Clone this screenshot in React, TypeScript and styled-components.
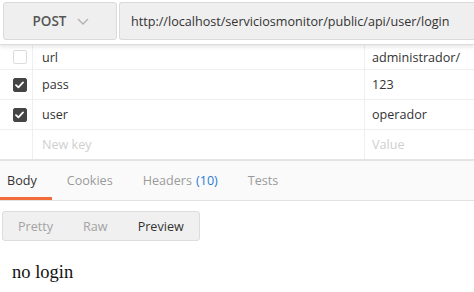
import React from 'react';
import styled, { createGlobalStyle } from 'styled-components';

const GlobalStyle = createGlobalStyle`
  html, body {
    margin: 0;
    padding: 0;
    background: #ffffff;
    overflow: hidden;
  }
  body {
    font-family: "Open Sans", "Liberation Sans", sans-serif;
    color: #333;
  }
`;

type Param = { key: string; value: string; checked: boolean };

const params: Param[] = [
  { key: 'url', value: 'administrador/', checked: false },
  { key: 'pass', value: '123', checked: true },
  { key: 'user', value: 'operador', checked: true },
];

const CheckIcon = () => (
  <svg width="9" height="8" viewBox="0 0 9 8">
    <path d="M1 4.2 L3.4 6.4 L8 1.4" stroke="#fff" strokeWidth="1.8" fill="none" strokeLinecap="round" strokeLinejoin="round" />
  </svg>
);

const Chevron = () => (
  <svg width="12" height="7" viewBox="0 0 12 7">
    <path d="M1 1 L6 6 L11 1" stroke="#b0b0b0" strokeWidth="1.3" fill="none" />
  </svg>
);

export default function App() {
  return (
    <>
      <GlobalStyle />
      <Page>
        <TopBar>
          <MethodBox>
            <MethodText>POST</MethodText>
            <Chevron />
          </MethodBox>
          <UrlBox>http://localhost/serviciosmonitor/public/api/user/login</UrlBox>
        </TopBar>

        <Table>
          {params.map((p, i) => (
            <Row key={p.key} $clipped={i === 0}>
              <CheckCell>
                <Checkbox $checked={p.checked}>{p.checked && <CheckIcon />}</Checkbox>
              </CheckCell>
              <KeyCell>{p.key}</KeyCell>
              <ValueCell>{p.value}</ValueCell>
            </Row>
          ))}
          <Row $last>
            <CheckCell />
            <KeyCell $placeholder>New key</KeyCell>
            <ValueCell $placeholder>Value</ValueCell>
          </Row>
        </Table>

        <Tabs>
          <Tab $active $first>Body</Tab>
          <Tab>Cookies</Tab>
          <Tab>
            Headers <Count>(10)</Count>
          </Tab>
          <Tab>Tests</Tab>
        </Tabs>

        <ResponseArea>
          <Segmented>
            <Segment>Pretty</Segment>
            <Segment>Raw</Segment>
            <Segment $active>Preview</Segment>
          </Segmented>
          <Preview>no login</Preview>
        </ResponseArea>
      </Page>
    </>
  );
}

const Page = styled.div`
  width: 474px;
  height: 292px;
  overflow: hidden;
`;

const TopBar = styled.div`
  display: flex;
  gap: 2px;
  height: 38px;
  padding: 2px 0 4px 3px;
  background: #fff;
  border-bottom: 1px solid #dcdcdc;
  box-shadow: 0 2px 4px rgba(0, 0, 0, 0.1);
  position: relative;
  z-index: 1;
`;

const MethodBox = styled.div`
  width: 114px;
  display: flex;
  align-items: center;
  justify-content: center;
  gap: 11px;
  padding-left: 2px;
  box-sizing: border-box;
  background: #efefef;
  border: 1px solid #dadada;
  border-radius: 3px;
`;

const MethodText = styled.span`
  font-size: 13.5px;
  font-weight: 600;
  color: #555;
`;

const UrlBox = styled.div`
  flex: 1;
  display: flex;
  align-items: center;
  padding-left: 11px;
  font-size: 12.6px;
  color: #333;
  background: #efefef;
  border: 1px solid #dadada;
  border-right: none;
  border-radius: 3px 0 0 3px;
  white-space: nowrap;
`;

const Table = styled.div`
  display: flex;
  flex-direction: column;
`;

const Row = styled.div<{ $clipped?: boolean; $last?: boolean }>`
  display: grid;
  grid-template-columns: 33px 332px 1fr;
  height: ${(p) => (p.$clipped ? '24px' : '29px')};
  border-bottom: ${(p) => (p.$last ? '2px solid #e4e4e4' : '1px solid #efefef')};
  font-size: 12.6px;
`;

const CheckCell = styled.div`
  display: flex;
  align-items: center;
  justify-content: center;
  padding-left: 7px;
  border-right: 1px solid #efefef;
`;

const Checkbox = styled.div<{ $checked: boolean }>`
  width: 14px;
  height: 14px;
  box-sizing: border-box;
  border-radius: 2px;
  display: flex;
  align-items: center;
  justify-content: center;
  background: ${(p) => (p.$checked ? '#454545' : '#fff')};
  border: 1px solid ${(p) => (p.$checked ? '#454545' : '#dcdcdc')};
`;

const KeyCell = styled.div<{ $placeholder?: boolean }>`
  display: flex;
  align-items: center;
  padding-left: 9px;
  color: ${(p) => (p.$placeholder ? '#cfcfcf' : '#333')};
  border-right: 1px solid #efefef;
`;

const ValueCell = styled.div<{ $placeholder?: boolean }>`
  display: flex;
  align-items: center;
  padding-left: 7px;
  white-space: nowrap;
  color: ${(p) => (p.$placeholder ? '#cfcfcf' : '#333')};
`;

const Tabs = styled.div`
  display: flex;
  height: 39px;
  background: #fafafa;
  border-bottom: 1px solid #e2e2e2;
`;

const Tab = styled.div<{ $active?: boolean; $first?: boolean }>`
  display: flex;
  align-items: center;
  gap: 4px;
  padding: 3px 15px 0 ${(p) => (p.$first ? '7px' : '15px')};
  font-size: 12.6px;
  color: ${(p) => (p.$active ? '#333' : '#9a9a9a')};
  border-bottom: 3px solid ${(p) => (p.$active ? '#f26b3a' : 'transparent')};
  white-space: nowrap;
`;

const Count = styled.span`
  color: #2a7bd4;
`;

const ResponseArea = styled.div`
  padding: 10px 0 0 2px;
`;

const Segmented = styled.div`
  display: inline-flex;
  height: 28px;
  background: #f0f0f0;
  border: 1px solid #dddddd;
  border-radius: 3px;
`;

const Segment = styled.div<{ $active?: boolean }>`
  display: flex;
  align-items: center;
  padding: 0 15px;
  font-size: 12.6px;
  color: ${(p) => (p.$active ? '#333' : '#a3a3a3')};
`;

const Preview = styled.div`
  margin-top: 21px;
  padding-left: 10px;
  font-family: "Liberation Serif", "Times New Roman", serif;
  font-size: 18.5px;
  color: #111;
`;
